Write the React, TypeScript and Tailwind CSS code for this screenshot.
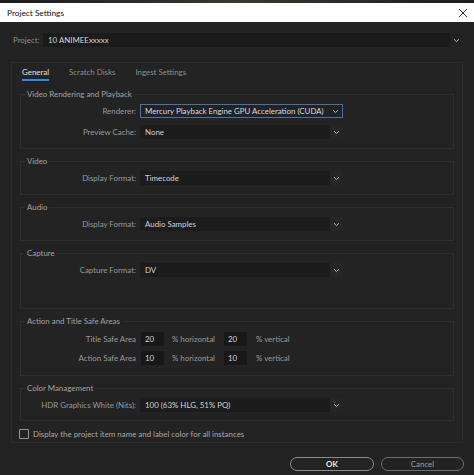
import React from "react";

function Chevron() {
  return (
    <svg width="7" height="5" viewBox="0 0 7 5">
      <path d="M1 1.2 L3.5 3.6 L6 1.2" fill="none" stroke="#b5b5b5" strokeWidth="1" />
    </svg>
  );
}

function Select({ value, active = false }: { value: string; active?: boolean }) {
  return (
    <div
      className={`h-[14px] w-[203px] flex items-center justify-between ${
        active ? "border border-[#4f6f9e] bg-[#1f2227] pl-[4px]" : "bg-[#1c1c1c] pl-[5px]"
      }`}
    >
      <span className={`whitespace-nowrap ${active ? "text-[#dcdcdc]" : "text-[#d2d2d2]"}`}>{value}</span>
      <span className={`w-[13px] h-full flex items-center justify-center ${active ? "" : "bg-[#262626]"}`}>
        <Chevron />
      </span>
    </div>
  );
}

function Row({ label, children }: { label: string; children: React.ReactNode }) {
  return (
    <div className="flex items-center h-[14px]">
      <div className="w-[119px] pr-[4px] text-right text-[#9a9a9a] whitespace-nowrap">{label}</div>
      {children}
    </div>
  );
}

function Section({
  title,
  children,
  className = "",
}: {
  title: string;
  children: React.ReactNode;
  className?: string;
}) {
  return (
    <div className={`relative border border-[#2f2f2f] ${className}`}>
      <div className="absolute top-[-6px] left-[4px] px-[2px] bg-[#232323] leading-[10px] text-[#a2a2a2] whitespace-nowrap">
        {title}
      </div>
      {children}
    </div>
  );
}

function NumBox({ v }: { v: string }) {
  return (
    <div className="w-[23px] h-[14px] bg-[#181818] flex items-center pl-[4px] text-[#d4d4d4]">{v}</div>
  );
}

export default function App() {
  return (
    <div className="w-[474px] h-[475px] bg-[#232323] overflow-hidden flex flex-col font-[Lato,'Open_Sans',sans-serif] text-[7.9px] leading-[10px]">
      {/* desktop strip */}
      <div className="h-[3px] bg-gradient-to-r from-[#1c1c1c] via-[#3a3a30] to-[#1c1c1c]" />
      {/* title bar */}
      <div className="h-[19px] bg-white flex items-center justify-between pl-[7px] pr-[6px]">
        <span className="text-[8.3px] text-[#111]">Project Settings</span>
        <svg width="10" height="10" viewBox="0 0 10 10">
          <path d="M1 1 L9 9 M9 1 L1 9" stroke="#333" strokeWidth="1" />
        </svg>
      </div>

      {/* project row */}
      <div className="mt-[11px] flex items-center h-[14px] pl-[13px] pr-[11px]">
        <span className="w-[30px] text-[#8c8c8c]">Project:</span>
        <div className="flex-1 h-[14px] bg-[#1b1b1b] flex items-center justify-between pl-[5px]">
          <span className="text-[#d6d6d6]">10 ANIMEExxxxx</span>
          <span className="w-[13px] h-full flex items-center justify-center bg-[#222]">
            <Chevron />
          </span>
        </div>
      </div>

      {/* main panel */}
      <div className="mt-[15px] ml-[11px] w-[452px] h-[381px] border border-[#2d2d2d] flex flex-col">
        {/* tabs */}
        <div className="mt-[4px] pl-[10px] flex gap-[20px]">
          <div className="flex flex-col">
            <span className="text-[#e2e2e2]">General</span>
            <div className="mt-[2px] h-[2px] bg-[#2e8de8]" />
          </div>
          <span className="text-[#8e8e8e]">Scratch Disks</span>
          <span className="text-[#8e8e8e]">Ingest Settings</span>
        </div>

        <div className="px-[8px] flex flex-col">
          <Section title="Video Rendering and Playback" className="mt-[13px] pt-[9px] pb-[9px]">
            <div className="flex flex-col gap-[7px]">
              <Row label="Renderer:">
                <Select value="Mercury Playback Engine GPU Acceleration (CUDA)" active />
              </Row>
              <Row label="Preview Cache:">
                <Select value="None" />
              </Row>
            </div>
          </Section>

          <Section title="Video" className="mt-[12px] pt-[9px] pb-[9px]">
            <Row label="Display Format:">
              <Select value="Timecode" />
            </Row>
          </Section>

          <Section title="Audio" className="mt-[12px] pt-[9px] pb-[9px]">
            <Row label="Display Format:">
              <Select value="Audio Samples" />
            </Row>
          </Section>

          <Section title="Capture" className="mt-[12px] pt-[9px] pb-[31px]">
            <Row label="Capture Format:">
              <Select value="DV" />
            </Row>
          </Section>

          <Section title="Action and Title Safe Areas" className="mt-[12px] pt-[10px] pb-[10px]">
            <div className="flex flex-col gap-[5px]">
              {[
                ["Title Safe Area", "20", "20"],
                ["Action Safe Area", "10", "10"],
              ].map(([l, h, v]) => (
                <div key={l} className="flex items-center h-[14px]">
                  <div className="w-[120px] pr-[5px] text-right text-[#9a9a9a] whitespace-nowrap">{l}</div>
                  <NumBox v={h} />
                  <span className="ml-[8px] w-[44px] text-[#9a9a9a] whitespace-nowrap">% horizontal</span>
                  <span className="ml-[8px]">
                    <NumBox v={v} />
                  </span>
                  <span className="ml-[9px] text-[#9a9a9a] whitespace-nowrap">% vertical</span>
                </div>
              ))}
            </div>
          </Section>

          <Section title="Color Management" className="mt-[12px] pt-[9px] pb-[8px]">
            <Row label="HDR Graphics White (Nits):">
              <Select value="100 (63% HLG, 51% PQ)" />
            </Row>
          </Section>
        </div>

        <div className="mt-[8px] ml-[7px] flex items-center">
          <div className="w-[10px] h-[10px] border border-[#9a9a9a] rounded-[1px]" />
          <span className="ml-[4px] text-[#a8a8a8] whitespace-nowrap">
            Display the project item name and label color for all instances
          </span>
        </div>
      </div>

      {/* buttons */}
      <div className="mt-[14px] flex justify-end gap-[7px] pr-[10px]">
        <div className="w-[84px] h-[14px] rounded-full border border-[#8a8a8a] flex items-center justify-center text-[#eaeaea] font-bold">
          OK
        </div>
        <div className="w-[83px] h-[14px] rounded-full border border-[#6e6e6e] flex items-center justify-center text-[#a0a0a0]">
          Cancel
        </div>
      </div>
    </div>
  );
}
